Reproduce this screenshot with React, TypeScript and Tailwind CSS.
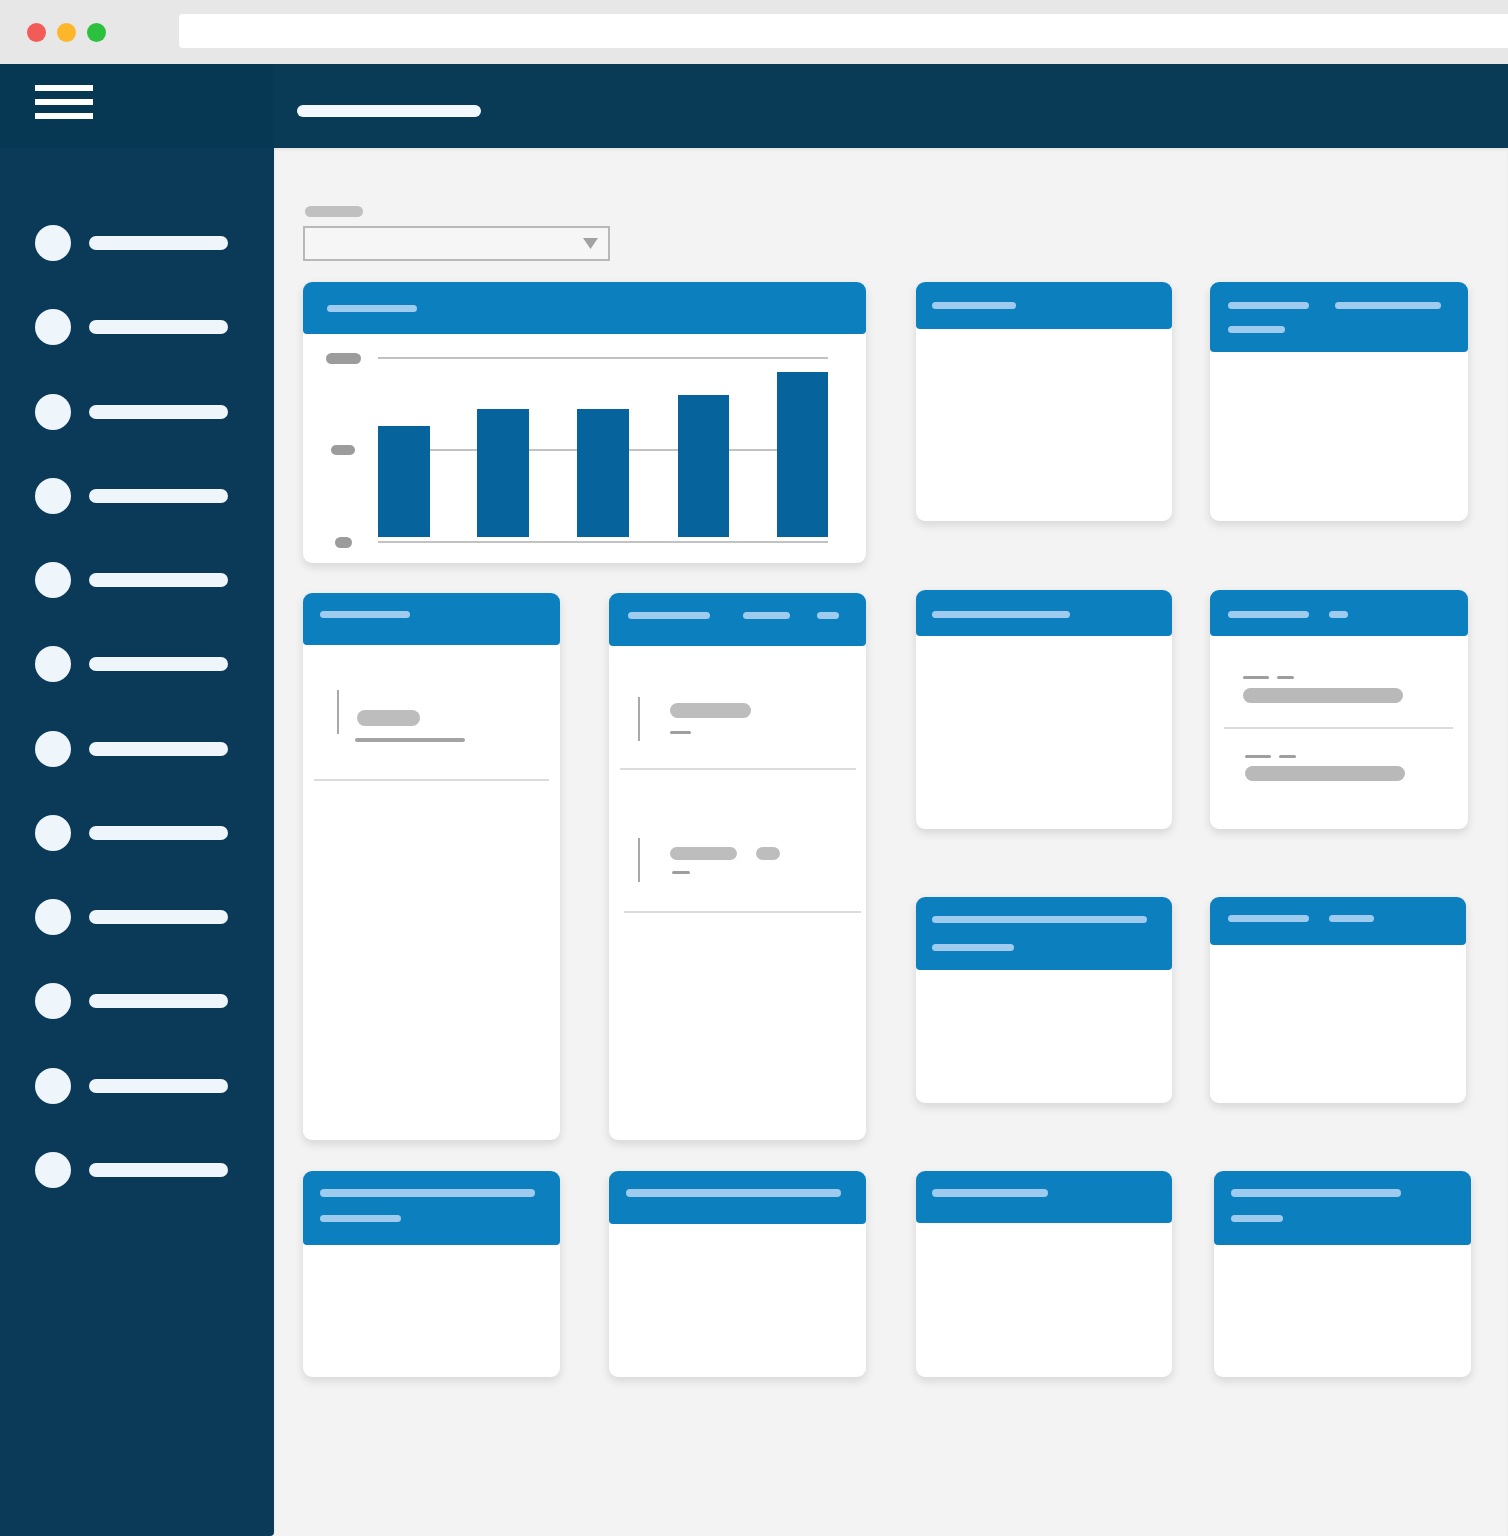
import type { ReactNode } from 'react';

const NAV_ROWS = Array.from({ length: 12 }, (_, i) => i);

function Pill({ className = '' }: { className?: string }): JSX.Element {
  return <div className={`h-[7px] rounded-full bg-[#9ecbee] shrink-0 ${className}`} />;
}

function Card({
  className = '',
  header,
  headerClass = '',
  children,
}: {
  className?: string;
  header: ReactNode;
  headerClass?: string;
  children?: ReactNode;
}): JSX.Element {
  return (
    <div
      className={`bg-white rounded-[9px] overflow-hidden shadow-[0_4px_10px_rgba(0,0,0,0.12)] flex flex-col ${className}`}
    >
      <div className={`bg-[#0c7fbf] rounded-b-[4px] shrink-0 flex flex-col ${headerClass}`}>{header}</div>
      <div className="flex-1 flex flex-col">{children}</div>
    </div>
  );
}

function BarChart(): JSX.Element {
  const bars = [
    { x: 75, y: 92, w: 52 },
    { x: 174, y: 75, w: 52 },
    { x: 274, y: 75, w: 52 },
    { x: 375, y: 61, w: 51 },
    { x: 474, y: 38, w: 51 },
  ];
  return (
    <svg width="563" height="229" viewBox="0 0 563 229" className="block">
      <rect x="23" y="19" width="35" height="11" rx="5.5" fill="#9c9c9c" />
      <rect x="28" y="111" width="24" height="10" rx="5" fill="#9c9c9c" />
      <rect x="32" y="203" width="17" height="11" rx="5.5" fill="#9c9c9c" />
      <line x1="75" y1="24" x2="525" y2="24" stroke="#c2c2c2" strokeWidth="2" />
      <line x1="75" y1="116" x2="525" y2="116" stroke="#c2c2c2" strokeWidth="2" />
      <line x1="75" y1="208" x2="525" y2="208" stroke="#c2c2c2" strokeWidth="2" />
      {bars.map((b) => (
        <rect key={b.x} x={b.x} y={b.y} width={b.w} height={203 - b.y} fill="#06639b" />
      ))}
    </svg>
  );
}

function Sidebar(): JSX.Element {
  return (
    <aside className="w-[274px] shrink-0 bg-[#0a3a57] pt-[77px] pl-[35px] flex flex-col gap-[48.27px] rounded-br-[4px]">
      {NAV_ROWS.map((i) => (
        <div key={i} className="flex items-center h-9">
          <div className="w-9 h-9 rounded-full bg-[#eef5fb]" />
          <div className="ml-[18px] w-[139px] h-[14px] rounded-full bg-[#eef5fb]" />
        </div>
      ))}
    </aside>
  );
}

function VLine({ className = '' }: { className?: string }): JSX.Element {
  return <div className={`w-[2px] bg-[#a9a9a9] shrink-0 ${className}`} />;
}

export default function App(): JSX.Element {
  return (
    <div className="w-[1508px] h-[1536px] overflow-hidden flex flex-col bg-[#f3f3f3] font-['Liberation_Sans',sans-serif]">
      {/* browser chrome */}
      <div className="h-[64px] shrink-0 bg-[#e7e7e7] flex items-center pl-[27px]">
        <div className="flex gap-[11px]">
          <span className="w-[19px] h-[19px] rounded-full bg-[#f25b58]" />
          <span className="w-[19px] h-[19px] rounded-full bg-[#fbb62a]" />
          <span className="w-[19px] h-[19px] rounded-full bg-[#2cc03f]" />
        </div>
        <div className="ml-[73px] flex-1 h-[34px] bg-white rounded-l-[4px] -mt-[2px]" />
      </div>

      {/* app header */}
      <header className="h-[84px] shrink-0 bg-[#093a56] flex">
        <div className="w-[274px] shrink-0 bg-[#063753] pl-[35px] pt-[21px] flex flex-col gap-[8px]">
          <div className="w-[58px] h-[6px] bg-white" />
          <div className="w-[58px] h-[6px] bg-white" />
          <div className="w-[58px] h-[6px] bg-white" />
        </div>
        <div className="ml-[23px] mt-[41px] w-[184px] h-[12px] rounded-full bg-[#f2f8fd]" />
      </header>

      <div className="flex-1 flex">
        <Sidebar />

        <main className="flex-1 pl-[29px] pt-[58px] shadow-[inset_0_2px_3px_rgba(0,0,0,0.06)]">
          {/* filter */}
          <div className="ml-[2px] w-[58px] h-[11px] rounded-full bg-[#c0c0c0]" />
          <div className="mt-[9px] w-[307px] h-[35px] border-2 border-[#b8b8b8] bg-[#f6f6f6] flex items-center justify-end pr-[10px]">
            <svg width="15" height="11" viewBox="0 0 15 11">
              <path d="M0 0 H15 L7.5 11 Z" fill="#a2a2a2" />
            </svg>
          </div>

          {/* upper block */}
          <div className="mt-[21px] flex items-start">
            {/* left: chart + two tall cards */}
            <div className="w-[563px] flex flex-col">
              <Card
                className="h-[281px]"
                headerClass="h-[52px] pl-[24px] pt-[23px]"
                header={<Pill className="w-[90px] h-[6px]" />}
              >
                <BarChart />
              </Card>

              <div className="mt-[30px] flex gap-[49px]">
                <Card
                  className="w-[257px] h-[547px]"
                  headerClass="h-[52px] pl-[17px] pt-[18px]"
                  header={<Pill className="w-[90px] h-[6px]" />}
                >
                  <div className="mt-[45px] ml-[34px] flex">
                    <VLine className="h-[44px]" />
                    <div className="ml-[18px] flex flex-col">
                      <div className="mt-[20px] w-[63px] h-[16px] rounded-full bg-[#bdbdbd]" />
                      <div className="mt-[12px] -ml-[2px] w-[110px] h-[4px] rounded-full bg-[#a3a3a3]" />
                    </div>
                  </div>
                  <div className="mt-[37px] mx-[11px] h-[2px] bg-[#dcdcdc]" />
                </Card>

                <Card
                  className="w-[257px] h-[547px]"
                  headerClass="h-[53px] pl-[19px] pt-[19px]"
                  header={
                    <div className="flex">
                      <Pill className="w-[82px]" />
                      <Pill className="ml-[33px] w-[47px]" />
                      <Pill className="ml-[27px] w-[22px]" />
                    </div>
                  }
                >
                  <div className="mt-[51px] ml-[29px] flex">
                    <VLine className="h-[44px]" />
                    <div className="ml-[30px] flex flex-col">
                      <div className="mt-[6px] w-[81px] h-[15px] rounded-full bg-[#bdbdbd]" />
                      <div className="mt-[13px] w-[21px] h-[3px] rounded-full bg-[#9e9e9e]" />
                    </div>
                  </div>
                  <div className="mt-[27px] ml-[11px] w-[236px] h-[2px] bg-[#dcdcdc]" />
                  <div className="mt-[68px] ml-[29px] flex">
                    <VLine className="h-[44px]" />
                    <div className="ml-[30px] flex flex-col">
                      <div className="mt-[9px] flex">
                        <div className="w-[67px] h-[13px] rounded-full bg-[#bdbdbd]" />
                        <div className="ml-[19px] w-[24px] h-[13px] rounded-full bg-[#bdbdbd]" />
                      </div>
                      <div className="mt-[11px] ml-[2px] w-[18px] h-[3px] rounded-full bg-[#9e9e9e]" />
                    </div>
                  </div>
                  <div className="mt-[29px] ml-[15px] w-[237px] h-[2px] bg-[#dcdcdc]" />
                </Card>
              </div>
            </div>

            {/* column 3 */}
            <div className="ml-[50px] w-[256px] flex flex-col">
              <Card
                className="h-[239px]"
                headerClass="h-[47px] pl-[16px] pt-[20px]"
                header={<Pill className="w-[84px]" />}
              />
              <Card
                className="mt-[69px] h-[239px]"
                headerClass="h-[46px] pl-[16px] pt-[21px]"
                header={<Pill className="w-[138px]" />}
              />
              <Card
                className="mt-[68px] h-[206px]"
                headerClass="h-[73px] pl-[16px] pt-[19px] gap-[21px]"
                header={
                  <>
                    <Pill className="w-[215px]" />
                    <Pill className="w-[82px]" />
                  </>
                }
              />
            </div>

            {/* column 4 */}
            <div className="ml-[38px] w-[258px] flex flex-col">
              <Card
                className="h-[239px]"
                headerClass="h-[70px] pl-[18px] pt-[20px] gap-[17px]"
                header={
                  <>
                    <div className="flex">
                      <Pill className="w-[81px]" />
                      <Pill className="ml-[26px] w-[106px]" />
                    </div>
                    <Pill className="w-[57px]" />
                  </>
                }
              />
              <Card
                className="mt-[69px] h-[239px]"
                headerClass="h-[46px] pl-[18px] pt-[21px]"
                header={
                  <div className="flex">
                    <Pill className="w-[81px]" />
                    <Pill className="ml-[20px] w-[19px]" />
                  </div>
                }
              >
                <div className="mt-[40px] ml-[33px] flex gap-[8px]">
                  <div className="w-[26px] h-[3px] rounded-full bg-[#9e9e9e]" />
                  <div className="w-[17px] h-[3px] rounded-full bg-[#9e9e9e]" />
                </div>
                <div className="mt-[9px] ml-[33px] w-[160px] h-[15px] rounded-full bg-[#b9b9b9]" />
                <div className="mt-[24px] ml-[14px] w-[229px] h-[2px] bg-[#dcdcdc]" />
                <div className="mt-[26px] ml-[35px] flex gap-[8px]">
                  <div className="w-[26px] h-[3px] rounded-full bg-[#9e9e9e]" />
                  <div className="w-[17px] h-[3px] rounded-full bg-[#9e9e9e]" />
                </div>
                <div className="mt-[8px] ml-[35px] w-[160px] h-[15px] rounded-full bg-[#b9b9b9]" />
              </Card>
              <Card
                className="mt-[68px] w-[256px] h-[206px]"
                headerClass="h-[48px] pl-[18px] pt-[18px]"
                header={
                  <div className="flex">
                    <Pill className="w-[81px]" />
                    <Pill className="ml-[20px] w-[45px]" />
                  </div>
                }
              />
            </div>
          </div>

          {/* bottom row */}
          <div className="mt-[31px] flex">
            <Card
              className="w-[257px] h-[206px]"
              headerClass="h-[74px] pl-[17px] pt-[18px] gap-[18px]"
              header={
                <>
                  <Pill className="w-[215px] h-[8px]" />
                  <Pill className="w-[81px]" />
                </>
              }
            />
            <Card
              className="ml-[49px] w-[257px] h-[206px]"
              headerClass="h-[53px] pl-[17px] pt-[18px]"
              header={<Pill className="w-[215px] h-[8px]" />}
            />
            <Card
              className="ml-[50px] w-[256px] h-[206px]"
              headerClass="h-[52px] pl-[16px] pt-[18px]"
              header={<Pill className="w-[116px] h-[8px]" />}
            />
            <Card
              className="ml-[42px] w-[257px] h-[206px]"
              headerClass="h-[74px] pl-[17px] pt-[18px] gap-[18px]"
              header={
                <>
                  <Pill className="w-[170px] h-[8px]" />
                  <Pill className="w-[52px]" />
                </>
              }
            />
          </div>
        </main>
      </div>
    </div>
  );
}
